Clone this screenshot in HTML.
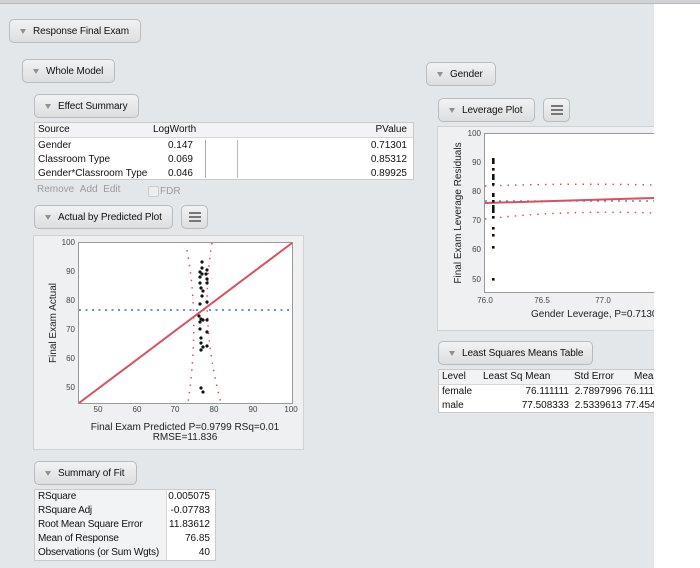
<!DOCTYPE html>
<html><head><style>
body{margin:0;width:700px;height:568px;background:#e4e7e9;font-family:"Liberation Sans",Arial,sans-serif;font-size:10px;color:#111;position:relative;overflow:hidden}
.a{position:absolute}
.btn{position:absolute;height:24px;border:1px solid #b9bcbf;border-radius:5px;background:linear-gradient(#f1f2f3,#dcdee0);box-sizing:border-box;line-height:23px;padding-left:23px;font-size:10px;white-space:nowrap;letter-spacing:-0.1px}
.btn:before{content:"";position:absolute;left:10px;top:9px;border-left:3.5px solid transparent;border-right:3.5px solid transparent;border-top:5px solid #8e9092}
.hb{position:absolute;width:27px;height:24px;border:1px solid #b9bcbf;border-radius:5px;background:linear-gradient(#f1f2f3,#dcdee0);box-sizing:border-box}
.hb i{position:absolute;left:7px;width:12px;height:2px;background:#777}
</style></head><body>
<div class="a" style="left:0;top:0;width:700px;height:3px;background:#cfd1d3;border-bottom:1px solid #b8babc"></div>

<div class="btn" style="left:9px;top:19px;width:132px">Response Final Exam</div>
<div class="btn" style="left:22px;top:59px;width:93px">Whole Model</div>
<div class="btn" style="left:34px;top:94px;width:105px">Effect Summary</div>

<div class="a" style="left:34px;top:122px;width:380px;height:58px;background:#fff;border:1px solid #c8cacc;box-sizing:border-box">
<div class="a" style="left:0;top:0;width:378px;height:14px;background:#f2f3f4;border-bottom:1px solid #d4d6d8"></div>
<div class="a" style="left:3px;top:1px">Source</div><div class="a" style="left:118px;top:1px">LogWorth</div><div class="a" style="right:6px;top:1px">PValue</div>
<div class="a" style="left:3px;top:16px;line-height:14px">Gender<br>Classroom Type<br>Gender*Classroom Type</div>
<div class="a" style="right:220px;top:16px;line-height:14px;text-align:right">0.147<br>0.069<br>0.046</div>
<div class="a" style="right:6px;top:16px;line-height:14px;text-align:right">0.71301<br>0.85312<br>0.89925</div>
<div class="a" style="left:170px;top:17px;width:1px;height:38px;background:#aaa"></div>
<div class="a" style="left:202px;top:17px;width:1px;height:38px;background:#bbb"></div>
</div>
<div class="a" style="left:37px;top:184px;color:#9a9c9e">Remove&nbsp;&nbsp;Add&nbsp;&nbsp;Edit</div>
<div class="a" style="left:148px;top:186px;width:9px;height:9px;border:1px solid #ccc;background:#ebedee;border-radius:2px"></div>
<div class="a" style="left:160px;top:186px;color:#9a9c9e">FDR</div>

<div class="btn" style="left:34px;top:205px;width:139px">Actual by Predicted Plot</div>
<div class="hb" style="left:181px;top:205px"><i style="top:6px"></i><i style="top:10px"></i><i style="top:14px"></i></div>

<div class="a" style="left:33px;top:235px;width:271px;height:215px;background:#eef0f1;border:1px solid #cfd1d3;box-sizing:border-box"></div>
<div class="a" style="left:437px;top:126px;width:217px;height:205px;border:1px solid #cfd1d3;border-right:none;box-sizing:border-box;background:#eef0f1"></div>
<svg class="a" style="left:0;top:0" width="700" height="568" font-family="Liberation Sans,Arial" font-size="8">
<rect x="78.5" y="242.5" width="214" height="161" fill="#fff" stroke="#999"/>
<g fill="#444" text-anchor="end">
<text x="75" y="245">100</text><text x="75" y="274">90</text><text x="75" y="303">80</text><text x="75" y="332">70</text><text x="75" y="361">60</text><text x="75" y="390">50</text></g>
<g fill="#444" text-anchor="middle">
<text x="98" y="412">50</text><text x="137" y="412">60</text><text x="175" y="412">70</text><text x="214" y="412">80</text><text x="253" y="412">90</text><text x="291" y="412">100</text></g>
<text x="0" y="0" transform="translate(56,323) rotate(-90)" text-anchor="middle" font-size="10" fill="#222">Final Exam Actual</text>
<text x="185" y="430" text-anchor="middle" font-size="10" fill="#222">Final Exam Predicted P=0.9799 RSq=0.01</text>
<text x="185" y="440" text-anchor="middle" font-size="10" fill="#222">RMSE=11.836</text>
<line x1="79" y1="310" x2="292" y2="310" stroke="#3a6fb0" stroke-width="1.5" stroke-dasharray="2,4.5"/>
<line x1="79" y1="403" x2="292" y2="243" stroke="#d9515e" stroke-width="2"/>
<path d="M187 250 Q200 320 188 403 M212 243 Q199 320 221 403" stroke="#d9515e" stroke-width="1.5" fill="none" stroke-dasharray="1.5,6"/>
<g fill="#111">
<circle cx="202" cy="262" r="1.6"/><circle cx="202" cy="268" r="1.6"/><circle cx="200" cy="272" r="1.6"/><circle cx="202" cy="274" r="1.6"/><circle cx="207" cy="270" r="1.6"/><circle cx="206" cy="274" r="1.6"/><circle cx="200" cy="277" r="1.6"/><circle cx="207" cy="279" r="1.6"/><circle cx="207" cy="283" r="1.6"/><circle cx="200" cy="283" r="1.6"/><circle cx="201" cy="288" r="1.6"/><circle cx="203" cy="291" r="1.6"/><circle cx="202" cy="296" r="1.6"/><circle cx="207" cy="302" r="1.6"/><circle cx="200" cy="304" r="1.6"/><circle cx="199" cy="316" r="1.6"/><circle cx="201" cy="319" r="1.6"/><circle cx="203" cy="320" r="1.6"/><circle cx="200" cy="322" r="1.6"/><circle cx="207" cy="320" r="1.6"/><circle cx="200" cy="329" r="1.6"/><circle cx="207" cy="332" r="1.6"/><circle cx="201" cy="338" r="1.6"/><circle cx="201" cy="343" r="1.6"/><circle cx="203" cy="347" r="1.6"/><circle cx="207" cy="346" r="1.6"/><circle cx="201" cy="350" r="1.6"/><circle cx="201" cy="388" r="1.6"/><circle cx="203" cy="392" r="1.6"/></g>

<rect x="484.5" y="133.5" width="180" height="159" fill="#fff" stroke="#999"/>
<g fill="#444" text-anchor="end">
<text x="481" y="136">100</text><text x="481" y="165">90</text><text x="481" y="194">80</text><text x="481" y="223">70</text><text x="481" y="252">60</text><text x="481" y="282">50</text></g>
<g fill="#444" text-anchor="middle"><text x="485" y="303">76.0</text><text x="542" y="303">76.5</text><text x="603" y="303">77.0</text></g>
<text transform="translate(461,213) rotate(-90)" text-anchor="middle" font-size="10" fill="#222">Final Exam Leverage Residuals</text>
<text x="531" y="317" font-size="10" fill="#222">Gender Leverage, P=0.7130</text>
<line x1="485" y1="201" x2="654" y2="201" stroke="#3a6fb0" stroke-width="1.3" stroke-dasharray="2,5"/>
<line x1="485" y1="203" x2="654" y2="198" stroke="#d9515e" stroke-width="2"/>
<path d="M485 186 Q570 183 654 185 M485 219 Q560 210 654 213" stroke="#d9515e" stroke-width="1.5" fill="none" stroke-dasharray="1.5,6"/>
<g fill="#111">
<rect x="492" y="158" width="2.6" height="6"/><rect x="492" y="168" width="2.6" height="2.6"/><rect x="492" y="174" width="2.6" height="6"/><rect x="492" y="183" width="2.6" height="2.6"/><rect x="492" y="193" width="2.6" height="4"/><rect x="492" y="200" width="2.6" height="2.6"/><rect x="492" y="205" width="2.6" height="8"/><rect x="492" y="216" width="2.6" height="2.6"/><rect x="492" y="227" width="2.6" height="2.6"/><rect x="492" y="234" width="2.6" height="2.6"/><rect x="492" y="246" width="2.6" height="2.6"/><rect x="492" y="278" width="2.6" height="2.6"/></g>
</svg>

<div class="btn" style="left:426px;top:62px;width:70px">Gender</div>
<div class="btn" style="left:438px;top:98px;width:97px">Leverage Plot</div>
<div class="hb" style="left:543px;top:98px"><i style="top:6px"></i><i style="top:10px"></i><i style="top:14px"></i></div>

<div class="btn" style="left:438px;top:341px;width:155px">Least Squares Means Table</div>
<div class="a" style="left:438px;top:369px;width:230px;height:44px;background:#fff;border:1px solid #c8cacc;box-sizing:border-box;overflow:hidden">
<div class="a" style="left:0;top:0;width:230px;height:14px;background:#f2f3f4;border-bottom:1px solid #d4d6d8"></div>
<div class="a" style="left:3px;top:1px">Level</div><div class="a" style="left:44px;top:1px">Least Sq Mean</div><div class="a" style="left:135px;top:1px">Std Error</div><div class="a" style="left:195px;top:1px">Mean</div>
<div class="a" style="left:3px;top:15px;line-height:14px">female<br>male</div>
<div class="a" style="left:60px;width:70px;top:15px;line-height:14px;text-align:right">76.111111<br>77.508333</div>
<div class="a" style="left:120px;width:63px;top:15px;line-height:14px;text-align:right">2.7897996<br>2.5339613</div>
<div class="a" style="left:186px;top:15px;line-height:14px">76.1111<br>77.4545</div>
</div>
<div class="a" style="left:654px;top:4px;width:46px;height:564px;background:#fff"></div>

<div class="btn" style="left:34px;top:461px;width:103px">Summary of Fit</div>
<div class="a" style="left:34px;top:489px;width:182px;height:72px;background:#fff;border:1px solid #c8cacc;box-sizing:border-box">
<div class="a" style="left:0;top:0;width:131px;height:70px;background:#f2f3f4;border-right:1px solid #d4d6d8"></div>
<div class="a" style="left:3px;top:0;line-height:14px;letter-spacing:-0.2px">RSquare<br>RSquare Adj<br>Root Mean Square Error<br>Mean of Response<br>Observations (or Sum Wgts)</div>
<div class="a" style="right:5px;top:0;line-height:14px;text-align:right">0.005075<br>-0.07783<br>11.83612<br>76.85<br>40</div>
</div>
</body></html>
